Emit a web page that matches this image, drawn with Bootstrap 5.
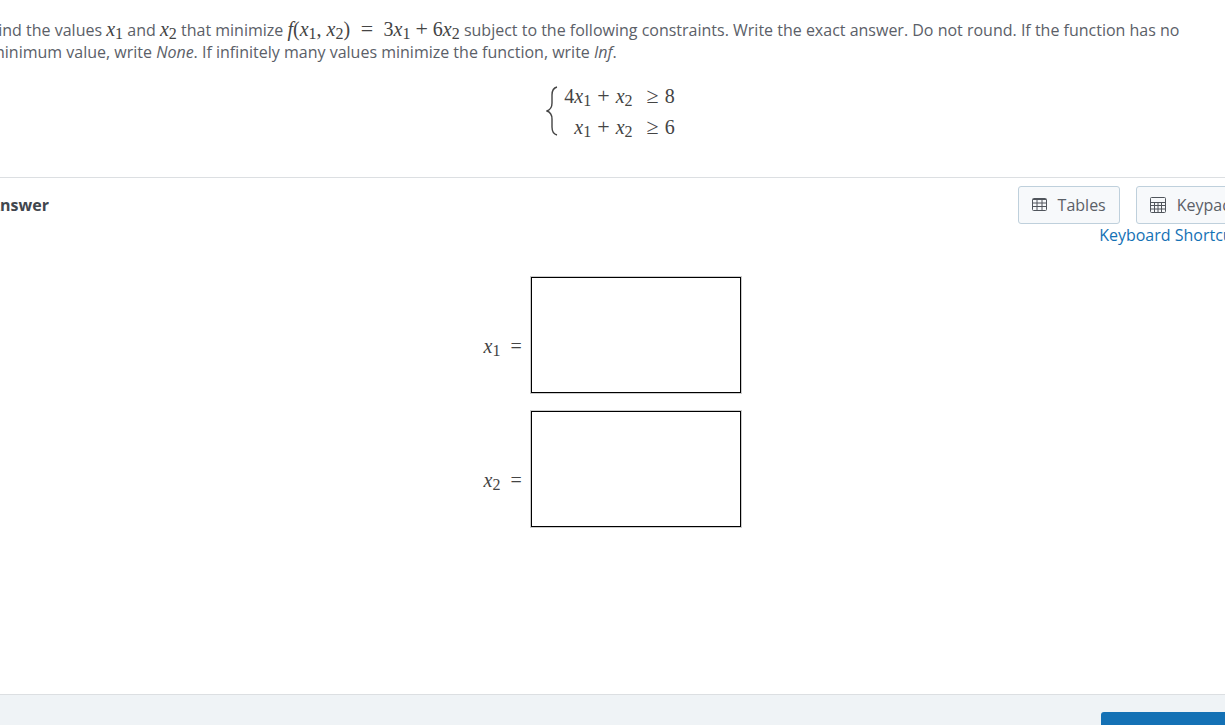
<!DOCTYPE html>
<html lang="en">
<head>
<meta charset="utf-8">
<meta name="viewport" content="width=device-width, initial-scale=1">
<title>Minimize the function</title>
<link href="https://cdn.jsdelivr.net/npm/bootstrap@5.3.0/dist/css/bootstrap.min.css" rel="stylesheet">
<style>
body{font-family:"Open Sans","Noto Sans",sans-serif;font-size:16px;line-height:22px;color:#5b6068;background:#fff}
.sheet{margin-left:-11px;margin-right:-21px}
.question{padding:19px 0 35px;border-bottom:1px solid #dcdfe2}
.prompt{padding-left:1px}
.eq{font-family:"Liberation Serif",serif;font-size:20px;line-height:20px;color:#444;white-space:nowrap}
.eq sub{font-size:16px;line-height:0;bottom:-3px}
.op{font-size:22px;line-height:0}
.system{margin-top:17px;gap:6px;padding-right:14px}
.system td{padding:0;height:31px;vertical-align:middle;text-align:right}
.system td + td{padding-left:13px}
.system .op{margin:0 1px}
.answer-bar{padding-top:8px}
.answer-title{color:#41464d}
.tool{height:38px;padding:0 13px;gap:10px;font-size:16px;line-height:22px;color:#5b6068;background:#f7f9fb;border:1px solid #bfd0dc;border-radius:3px}
.tool:hover{background:#eef3f7;color:#444}
.shortcut{color:#1471b5;text-decoration:none}
.answers{gap:16px;padding:30px 10px 0 0}
.answers label{padding-top:22px;width:38px}
.answer-box{width:212px;height:118px;border:1px solid #ccc;box-shadow:inset 0 0 0 1px #000;background:#fff;padding:8px;border-radius:0;resize:none;display:block}
.answer-box:focus{outline:none;box-shadow:inset 0 0 0 2px #1471b5}
.page-foot{height:72px;margin-bottom:-41px;padding:17px 0 0;background:#eff3f6;border-top:1px solid #dcdfe2}
.submit{height:38px;padding:0 16px;color:#fff;background:#1471b5;border:0;border-radius:3px}
</style>
</head>
<body class="vh-100 overflow-hidden">
<div class="sheet d-flex flex-column h-100">
  <main class="flex-grow-1">
    <section class="question">
      <p class="prompt mb-0">Find the values <span class="eq"><i>x</i><sub>1</sub></span> and <span class="eq"><i>x</i><sub>2</sub></span> that minimize <span class="eq"><i>f</i>(<i>x</i><sub>1</sub>, <i>x</i><sub>2</sub>) <span class="op">&nbsp;=&nbsp;</span> 3<i>x</i><sub>1</sub> <span class="op">+</span> 6<i>x</i><sub>2</sub></span> subject to the following constraints. Write the exact answer. Do not round. If the function has no<br>minimum value, write <em>None</em>. If infinitely many values minimize the function, write <em>Inf</em>.</p>
      <div class="system eq d-flex justify-content-center align-items-center">
        <svg width="12" height="50" viewBox="0 0 12 50" fill="none" stroke="#444" stroke-width="1.4" aria-hidden="true"><path d="M11 1C7 2 6 5 6 9v8c0 4-1 6.500-5 8 4 1.500 5 4 5 8v8c0 4 1 7 5 8"/></svg>
        <table><tbody>
          <tr><td>4<i>x</i><sub>1</sub> <span class="op">+</span> <i>x</i><sub>2</sub></td><td><span class="op">≥</span> 8</td></tr>
          <tr><td><i>x</i><sub>1</sub> <span class="op">+</span> <i>x</i><sub>2</sub></td><td><span class="op">≥</span> 6</td></tr>
        </tbody></table>
      </div>
    </section>
    <section>
      <div class="answer-bar d-flex justify-content-between align-items-center">
        <strong class="answer-title">Answer</strong>
        <div class="d-flex gap-3">
          <button type="button" class="tool btn d-flex align-items-center">
            <svg width="16" height="14" viewBox="0 0 16 14" fill="none" stroke="#50555c" aria-hidden="true"><rect x=".5" y=".5" width="14" height="12" rx="1"/><path d="M1 1.500h13M1 5h13M1 8.500h13M5 1v11M10 1v11"/></svg>Tables</button>
          <button type="button" class="tool btn d-flex align-items-center">
            <svg width="17" height="16" viewBox="0 0 17 16" fill="none" stroke="#50555c" aria-hidden="true"><rect x=".5" y=".5" width="15" height="15" rx="1"/><path d="M1 5.500h14M1 8.500h14M1 12h14M4.500 6v9M8 6v9M11.500 6v9"/></svg>Keypad</button>
        </div>
      </div>
      <div class="text-end"><a class="shortcut" href="#">Keyboard Shortcuts</a></div>
      <div class="answers d-flex flex-column align-items-center">
        <div class="d-flex align-items-center gap-2"><label class="eq" for="x1"><i>x</i><sub>1</sub>&nbsp; =</label><textarea class="answer-box" id="x1"></textarea></div>
        <div class="d-flex align-items-center gap-2"><label class="eq" for="x2"><i>x</i><sub>2</sub>&nbsp; =</label><textarea class="answer-box" id="x2"></textarea></div>
      </div>
    </section>
  </main>
  <footer class="page-foot d-flex justify-content-end flex-shrink-0">
    <button type="submit" class="submit">Submit Answer</button>
  </footer>
</div>
<script src="https://cdn.jsdelivr.net/npm/bootstrap@5.3.0/dist/js/bootstrap.bundle.min.js"></script>
</body>
</html>
